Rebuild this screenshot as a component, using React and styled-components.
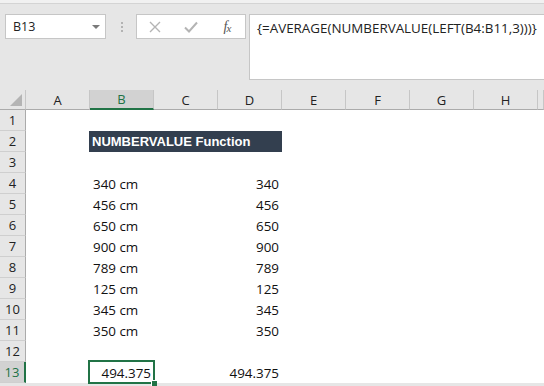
import React from 'react';
import styled, { createGlobalStyle } from 'styled-components';

const GlobalStyle = createGlobalStyle`
  body {
    margin: 0;
    background: #ffffff;
  }
`;

const Window = styled.div`
  width: 544px;
  height: 386px;
  overflow: hidden;
  background: #e6e6e6;
  font-family: "Open Sans", "Liberation Sans", sans-serif;
  color: #222;
`;

const TopStrip = styled.div`
  height: 3px;
  background: #f1f1f1;
  border-bottom: 1px solid #d4d4d4;
`;

const FormulaRow = styled.div`
  display: flex;
  align-items: flex-start;
  height: 86px;
  padding: 10px 0 0 5px;
  box-sizing: border-box;
`;

const NameBox = styled.div`
  display: flex;
  align-items: center;
  width: 101px;
  height: 25px;
  box-sizing: border-box;
  padding-left: 7px;
  background: #fff;
  border: 1px solid #c6c6c6;
  font-size: 12.5px;
  color: #222;
`;

const Caret = styled.span`
  margin-left: auto;
  margin-right: 5px;
  width: 0;
  height: 0;
  border-left: 4px solid transparent;
  border-right: 4px solid transparent;
  border-top: 4px solid #7a7a7a;
`;

const Grip = styled.div`
  display: flex;
  flex-direction: column;
  justify-content: center;
  gap: 2px;
  height: 25px;
  margin: 0 13px 0 15px;

  span {
    width: 2px;
    height: 2px;
    background: #b3b3b3;
  }
`;

const FxBox = styled.div`
  display: grid;
  grid-template-columns: repeat(3, 36px);
  align-items: center;
  justify-items: center;
  width: 110px;
  height: 25px;
  box-sizing: border-box;
  background: #fff;
  border: 1px solid #c6c6c6;
`;

const FxLabel = styled.span`
  font-family: "Liberation Serif", serif;
  font-style: italic;
  font-size: 14px;
  color: #555;
  letter-spacing: -1px;

  sub {
    font-size: 11px;
    vertical-align: -1px;
  }
`;

const FormulaInput = styled.div`
  flex: 1;
  height: 66px;
  margin-left: 3px;
  box-sizing: border-box;
  padding: 4px 0 0 7px;
  background: #fff;
  border: 1px solid #c6c6c6;
  border-right: none;
  font-size: 13.4px;
  white-space: nowrap;
  color: #222;
`;

const COLS = '26px repeat(8, 64px) 1fr';

const HeaderRow = styled.div`
  display: grid;
  grid-template-columns: ${COLS};
  height: 20px;
`;

const Corner = styled.div`
  display: flex;
  align-items: flex-end;
  justify-content: flex-end;
  padding: 0 3px 3px 0;
  border-right: 1px solid #c6c6c6;
  border-bottom: 1px solid #ababab;
`;

const ColHead = styled.div`
  display: flex;
  align-items: center;
  justify-content: center;
  box-sizing: border-box;
  font-size: 13px;
  color: ${p => (p.$active ? '#217346' : '#222')};
  background: ${p => (p.$active ? '#d2d2d2' : '#e6e6e6')};
  border-right: 1px solid #c6c6c6;
  border-bottom: ${p => (p.$active ? '2px solid #217346' : '1px solid #ababab')};
`;

const Row = styled.div`
  display: grid;
  grid-template-columns: ${COLS};
  height: 21px;
  background: #fff;
`;

const RowHead = styled.div`
  display: flex;
  align-items: center;
  justify-content: center;
  box-sizing: border-box;
  font-size: 13px;
  color: ${p => (p.$active ? '#217346' : '#222')};
  background: ${p => (p.$active ? '#d2d2d2' : '#e6e6e6')};
  border-bottom: 1px solid #cfcfcf;
  border-right: ${p => (p.$active ? '2px solid #217346' : '1px solid #ababab')};
`;

const Cell = styled.div`
  position: relative;
  display: flex;
  align-items: center;
  justify-content: ${p => (p.$right ? 'flex-end' : 'flex-start')};
  padding: 1px ${p => (p.$right ? '3px' : '0')} 0 ${p => (p.$right ? '0' : '3px')};
  font-size: 13.4px;
  color: #111;
  white-space: nowrap;
`;

const TitleCell = styled.div`
  grid-column: span 3;
  display: flex;
  align-items: center;
  padding-left: 3px;
  margin-left: -1px;
  background: #333f4f;
  color: #fff;
  font-family: "Liberation Sans", Arial, sans-serif;
  font-weight: bold;
  font-size: 13px;
`;

const Selection = styled.div`
  position: absolute;
  top: -2px;
  left: -2px;
  right: -1px;
  bottom: -1px;
  border: 2px solid #217346;
  pointer-events: none;

  &::after {
    content: '';
    position: absolute;
    right: -4px;
    bottom: -4px;
    width: 5px;
    height: 5px;
    background: #217346;
    border-left: 1px solid #fff;
    border-top: 1px solid #fff;
  }
`;

const columns = ['A', 'B', 'C', 'D', 'E', 'F', 'G', 'H'];
const values = ['340', '456', '650', '900', '789', '125', '345', '350'];

function CrossIcon() {
  return (
    <svg width="12" height="12" viewBox="0 0 12 12">
      <path d="M1 1 L11 11 M11 1 L1 11" stroke="#b4b4b4" strokeWidth="1.4" fill="none" />
    </svg>
  );
}

function CheckIcon() {
  return (
    <svg width="14" height="12" viewBox="0 0 14 12">
      <path d="M1 6.5 L5 10.5 L13 1.5" stroke="#b4b4b4" strokeWidth="2" fill="none" />
    </svg>
  );
}

function CornerMark() {
  return (
    <svg width="12" height="12" viewBox="0 0 12 12">
      <polygon points="12,0 12,12 0,12" fill="#b4b4b4" />
    </svg>
  );
}

function renderCells(r) {
  if (r === 2) {
    return (
      <>
        <Cell />
        <TitleCell>NUMBERVALUE Function</TitleCell>
      </>
    );
  }
  let b = null;
  let d = null;
  let selected = false;
  if (r >= 4 && r <= 11) {
    b = `${values[r - 4]} cm`;
    d = values[r - 4];
  }
  if (r === 13) {
    b = '494.375';
    d = '494.375';
    selected = true;
  }
  return (
    <>
      <Cell />
      <Cell $right={r === 13}>
        {b}
        {selected && <Selection />}
      </Cell>
      <Cell />
      <Cell $right>{d}</Cell>
    </>
  );
}

export default function App() {
  const rows = Array.from({ length: 13 }, (_, i) => i + 1);
  return (
    <Window>
      <GlobalStyle />
      <TopStrip />
      <FormulaRow>
        <NameBox>
          B13
          <Caret />
        </NameBox>
        <Grip>
          <span />
          <span />
          <span />
        </Grip>
        <FxBox>
          <CrossIcon />
          <CheckIcon />
          <FxLabel>f<sub>x</sub></FxLabel>
        </FxBox>
        <FormulaInput>{'{=AVERAGE(NUMBERVALUE(LEFT(B4:B11,3)))}'}</FormulaInput>
      </FormulaRow>
      <HeaderRow>
        <Corner>
          <CornerMark />
        </Corner>
        {columns.map(c => (
          <ColHead key={c} $active={c === 'B'}>{c}</ColHead>
        ))}
        <ColHead />
      </HeaderRow>
      {rows.map(r => (
        <Row key={r}>
          <RowHead $active={r === 13}>{r}</RowHead>
          {renderCells(r)}
        </Row>
      ))}
    </Window>
  );
}
